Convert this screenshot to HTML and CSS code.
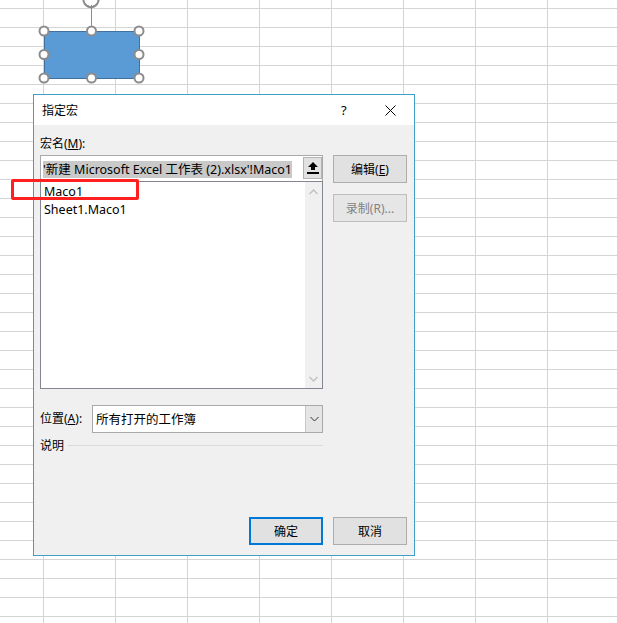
FILE: index.html
```html
<!DOCTYPE html>
<html lang="zh-CN">
<head>
    <meta charset="UTF-8">
    <title>指定宏</title>
    <link rel="stylesheet" href="styles.css">
</head>
<body>
    <div class="sheet">
        <!-- 选中的矩形形状 -->
        <svg class="shape" width="160" height="90" viewBox="0 0 160 90">
            <path d="M84 -3 A7.5 7.5 0 1 0 98 -3" fill="none" stroke="#8c8c8c" stroke-width="2"/>
            <path d="M95 -2 L98.5 0 L101 -4" fill="none" stroke="#8c8c8c" stroke-width="1.5"/>
            <line x1="91.5" y1="5" x2="91.5" y2="31" stroke="#8c8c8c" stroke-width="1"/>
            <rect x="44.5" y="31.5" width="95" height="47" fill="#5b9bd5" stroke="#41719c" stroke-width="1"/>
            <g fill="#fff" stroke="#8c8c8c" stroke-width="2">
                <circle cx="44" cy="31" r="4.5"/>
                <circle cx="91.5" cy="31" r="4.5"/>
                <circle cx="139" cy="31" r="4.5"/>
                <circle cx="44" cy="54.5" r="4.5"/>
                <circle cx="139" cy="54.5" r="4.5"/>
                <circle cx="44" cy="78" r="4.5"/>
                <circle cx="91.5" cy="78" r="4.5"/>
                <circle cx="139" cy="78" r="4.5"/>
            </g>
        </svg>

        <div class="dialog">
            <div class="titlebar">
                <span class="title">指定宏</span>
                <span class="help">?</span>
                <svg class="close" width="11" height="11" viewBox="0 0 11 11">
                    <path d="M0.5 0.5 L10.5 10.5 M10.5 0.5 L0.5 10.5" stroke="#000" stroke-width="1"/>
                </svg>
            </div>

            <div class="content">
                <div class="left">
                    <div class="label">宏名(<u>M</u>):</div>
                    <div class="name-box">
                        <div class="name-text"><span class="selected">'新建 Microsoft Excel 工作表 (2).xlsx'!Maco1</span></div>
                        <div class="upload">
                            <svg width="12" height="13" viewBox="0 0 12 13">
                                <path d="M6 1 L11 6 L8 6 L8 9 L4 9 L4 6 L1 6 Z" fill="#000"/>
                                <rect x="0" y="11" width="12" height="2" fill="#000"/>
                            </svg>
                        </div>
                    </div>
                    <div class="list">
                        <div class="items">
                            <div class="item">Maco1</div>
                            <div class="item">Sheet1.Maco1</div>
                        </div>
                        <div class="scrollbar">
                            <svg width="9" height="6" viewBox="0 0 9 6"><path d="M0.5 5 L4.5 1 L8.5 5" fill="none" stroke="#c2c2c2" stroke-width="1.5"/></svg>
                            <svg width="9" height="6" viewBox="0 0 9 6"><path d="M0.5 1 L4.5 5 L8.5 1" fill="none" stroke="#c2c2c2" stroke-width="1.5"/></svg>
                        </div>
                    </div>

                    <div class="location">
                        <span class="label">位置(<u>A</u>):</span>
                        <div class="select">
                            <span class="select-text">所有打开的工作簿</span>
                            <span class="select-arrow">
                                <svg width="9" height="6" viewBox="0 0 9 6"><path d="M0.5 1 L4.5 5 L8.5 1" fill="none" stroke="#333" stroke-width="1"/></svg>
                            </span>
                        </div>
                    </div>

                    <div class="desc">
                        <span>说明</span>
                        <span class="rule"></span>
                    </div>
                </div>

                <div class="right">
                    <button class="btn">编辑(<u>E</u>)</button>
                    <button class="btn disabled">录制(R)...</button>
                </div>
            </div>

            <div class="footer">
                <button class="btn default">确定</button>
                <button class="btn">取消</button>
            </div>
        </div>

        <div class="mark"></div>
    </div>
</body>
</html>
```

FILE: styles.css
```css
* {
    margin: 0;
    padding: 0;
    box-sizing: border-box;
}

body {
    width: 617px;
    height: 623px;
    overflow: hidden;
    font-family: "Noto Sans", "Noto Sans CJK SC", sans-serif;
    font-size: 12px;
    color: #000;
}

.sheet {
    position: relative;
    width: 617px;
    height: 623px;
    background-color: #fff;
    background-image:
        linear-gradient(to right, #d4d4d4 1px, transparent 1px),
        linear-gradient(to bottom, #d4d4d4 1px, transparent 1px);
    background-size: 72px 19px;
    background-position: 43px 8px;
}

.shape {
    position: absolute;
    left: 0;
    top: 0;
    overflow: visible;
}

.dialog {
    position: absolute;
    left: 33px;
    top: 94px;
    width: 382px;
    height: 462px;
    border: 1px solid #3f9fc6;
    background: #f0f0f0;
    display: flex;
    flex-direction: column;
}

.titlebar {
    height: 30px;
    background: #fff;
    display: flex;
    align-items: center;
    padding-left: 8px;
}

.title {
    flex-grow: 1;
}

.help {
    width: 20px;
    font-size: 13px;
    margin-right: 24px;
}

.close {
    margin-right: 18px;
}

.content {
    display: grid;
    grid-template-columns: 283px 74px;
    column-gap: 10px;
    padding: 0 7px 0 6px;
}

.label {
    line-height: 16px;
}

.left > .label {
    margin-top: 11px;
    margin-bottom: 3px;
}

.name-box {
    display: flex;
    height: 26px;
    border: 1px solid #a9a9a9;
    border-bottom: none;
    background: #fff;
}

.name-text {
    flex-grow: 1;
    padding: 3px 0 0 2px;
    white-space: nowrap;
    overflow: hidden;
}

.selected {
    background: #c9c9c9;
    font-size: 12.5px;
}

.upload {
    width: 19px;
    margin: 1px 0 2px;
    border: 1px solid #b4b4b4;
    background: #e1e1e1;
    display: flex;
    justify-content: center;
    padding-top: 3px;
}

.list {
    height: 208px;
    display: flex;
    border: 1px solid #828790;
    background: #fff;
}

.items {
    flex-grow: 1;
    padding: 1px 0 0 3px;
}

.item {
    font-size: 12.5px;
    line-height: 18px;
}

.scrollbar {
    width: 17px;
    background: #f0f0f0;
    display: flex;
    flex-direction: column;
    justify-content: space-between;
    align-items: center;
    padding: 7px 0 6px;
}

.location {
    display: flex;
    align-items: center;
    margin-top: 16px;
}

.location .label {
    width: 52px;
}

.select {
    flex-grow: 1;
    height: 28px;
    display: flex;
    border: 1px solid #a9a9a9;
    background: #fff;
}

.select-text {
    flex-grow: 1;
    padding: 3px 0 0 3px;
    font-size: 12.5px;
}

.select-arrow {
    width: 17px;
    background: #e5e5e5;
    border-left: 1px solid #c8c8c8;
    display: flex;
    align-items: center;
    justify-content: center;
}

.desc {
    display: flex;
    align-items: center;
    margin-top: 4px;
    height: 16px;
}

.rule {
    flex-grow: 1;
    height: 1px;
    background: #dadada;
    margin-left: 4px;
}

.right {
    display: flex;
    flex-direction: column;
    gap: 11px;
    padding-top: 30px;
}

.btn {
    height: 28px;
    width: 74px;
    border: 1px solid #adadad;
    background: #e1e1e1;
    font-family: inherit;
    font-size: 12px;
    color: #000;
}

.btn.disabled {
    color: #838383;
    border-color: #bfbfbf;
    background: #e6e6e6;
}

.btn.default {
    border: 2px solid #0078d7;
}

.footer {
    margin-top: auto;
    display: flex;
    justify-content: flex-end;
    gap: 10px;
    padding: 0 7px 10px 0;
}

.mark {
    position: absolute;
    left: 11px;
    top: 179px;
    width: 128px;
    height: 21px;
    border: 3px solid #ff2020;
    border-radius: 2px;
}
```
